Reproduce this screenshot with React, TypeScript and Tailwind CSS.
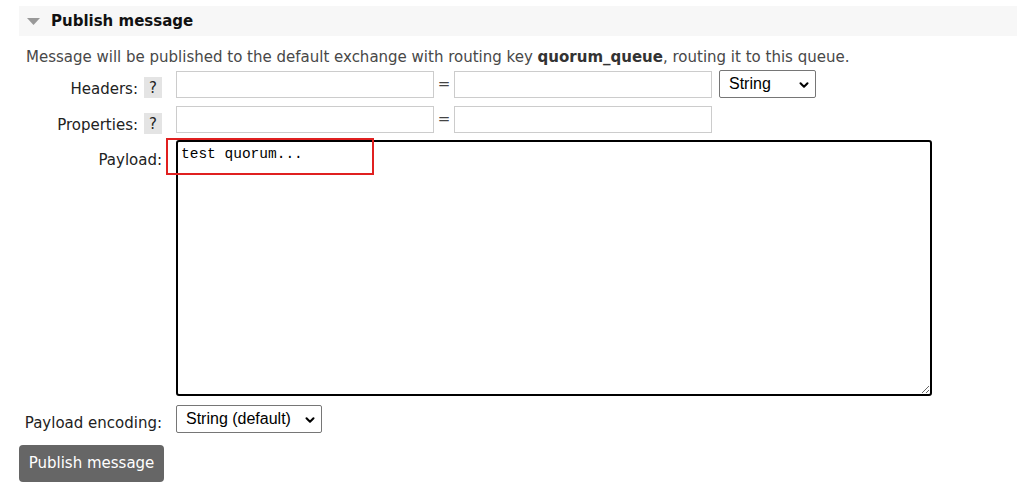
import React from 'react';
import { ChevronDown } from 'lucide-react';

const font = "font-['DejaVu_Sans',Verdana,sans-serif]";

const HelpBox: React.FC = () => (
  <span className="ml-[6px] inline-flex h-[21px] w-[18px] items-center justify-center bg-[#e4e4e4] text-[15px] text-[#222]">?</span>
);

const TextInput: React.FC<{ width: string }> = ({ width }) => (
  <input type="text" className={`${width} h-[27px] border border-[#ccc] bg-white outline-none`} />
);

const Select: React.FC<{ label: string; width: string }> = ({ label, width }) => (
  <div className={`relative ${width} h-[28px] rounded-[2px] border border-[#767676] bg-white`}>
    <span className="absolute left-[9px] top-[3px] font-['Liberation_Sans',Arial,sans-serif] text-[16px] leading-[20px] text-black">{label}</span>
    <ChevronDown className="absolute right-[4px] top-[7px] h-[14px] w-[14px] text-black" strokeWidth={3.5} />
  </div>
);

export default function App() {
  return (
    <div className={`${font} h-[489px] w-[1017px] overflow-hidden bg-white pl-[19px] pt-[6px]`}>
      {/* Section header */}
      <div className="flex h-[30px] items-center bg-[#f7f7f7] pl-[8px]">
        <svg width="13" height="8" viewBox="0 0 13 8" className="mt-[1px]">
          <polygon points="0,0 13,0 6.5,7" fill="#999" />
        </svg>
        <span className="ml-[11px] text-[15px] font-bold leading-[20px] text-[#111]">Publish message</span>
      </div>

      <div className="pl-[7px]">
        <p className="mt-[11px] text-[15px] leading-[20px] text-[#484848]">
          Message will be published to the default exchange with routing key <b className="text-[#333]">quorum_queue</b>, routing it to this queue.
        </p>

        {/* Headers */}
        <div className="mt-[3px] flex h-[28px] items-start">
          <div className="flex w-[136px] justify-end pt-[7px] text-[15px] leading-[18px] text-[#222]">
            <span className="pt-[3px]">Headers:</span>
            <HelpBox />
          </div>
          <div className="ml-[14px] flex items-center">
            <TextInput width="w-[258px]" />
            <span className="w-[20px] text-center text-[15px] text-[#444]">=</span>
            <TextInput width="w-[258px]" />
            <div className="ml-[7px]">
              <Select label="String" width="w-[97px]" />
            </div>
          </div>
        </div>

        {/* Properties */}
        <div className="mt-[8px] flex h-[27px] items-start">
          <div className="flex w-[136px] justify-end pt-[7px] text-[15px] leading-[18px] text-[#222]">
            <span className="pt-[3px]">Properties:</span>
            <HelpBox />
          </div>
          <div className="ml-[14px] flex items-center">
            <TextInput width="w-[258px]" />
            <span className="w-[20px] text-center text-[15px] text-[#444]">=</span>
            <TextInput width="w-[258px]" />
          </div>
        </div>

        {/* Payload */}
        <div className="mt-[7px] flex items-start">
          <div className="w-[136px] pt-[11px] text-right text-[15px] leading-[18px] text-[#222]">Payload:</div>
          <div className="relative ml-[14px]">
            <textarea
              defaultValue="test quorum..."
              className="block h-[256px] w-[756px] resize rounded-[3px] border-2 border-black px-[3px] py-[3px] font-['Liberation_Mono','Courier_New',monospace] text-[14.5px] leading-[18px] text-black outline-none"
            />
            <div className="pointer-events-none absolute left-[-10px] top-[-2px] h-[37px] w-[208px] border-2 border-[#e02020]" />
          </div>
        </div>

        {/* Payload encoding */}
        <div className="mt-[9px] flex items-start">
          <div className="flex w-[136px] justify-end whitespace-nowrap pt-[9px] text-[15px] leading-[18px] text-[#222]">
            <span>Payload encoding:</span>
          </div>
          <div className="ml-[14px]">
            <Select label="String (default)" width="w-[146px]" />
          </div>
        </div>
      </div>

      <button className="mt-[12px] block h-[37px] w-[145px] rounded-[4px] bg-[#666] text-[15px] text-white">
        Publish message
      </button>
    </div>
  );
}
